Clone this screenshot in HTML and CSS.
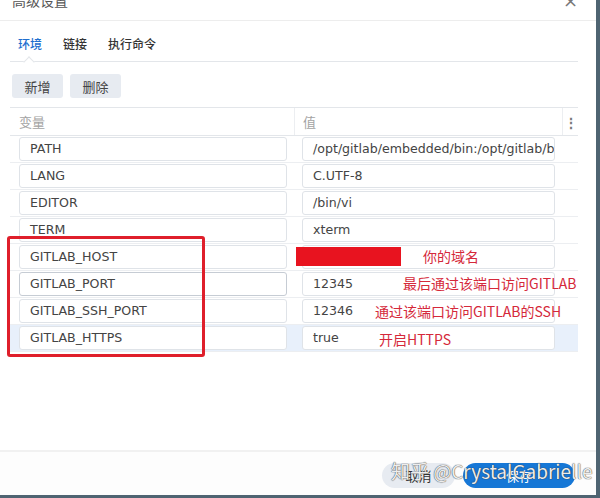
FILE: index.html
```html
<!DOCTYPE html>
<html lang="zh">
<head>
    <meta charset="UTF-8">
    <title>高级设置</title>
    <link rel="stylesheet" href="styles.css">
</head>
<body>
    <div class="dialog">
        <div class="dlg-header">
            <span class="dlg-title">高级设置</span>
            <span class="dlg-close">&times;</span>
        </div>

        <div class="tabs">
            <span class="tab active">环境</span>
            <span class="tab">链接</span>
            <span class="tab">执行命令</span>
        </div>

        <div class="toolbar">
            <button class="btn">新增</button>
            <button class="btn">删除</button>
        </div>

        <div class="grid">
            <div class="grid-head">
                <div class="col-var">变量</div>
                <div class="col-val">值</div>
                <div class="col-menu">&#8942;</div>
            </div>
            <div class="grid-row">
                <div class="col-var"><div class="field">PATH</div></div>
                <div class="col-val"><div class="field">/opt/gitlab/embedded/bin:/opt/gitlab/bin:/usr/local/sbin</div></div>
            </div>
            <div class="grid-row">
                <div class="col-var"><div class="field">LANG</div></div>
                <div class="col-val"><div class="field">C.UTF-8</div></div>
            </div>
            <div class="grid-row">
                <div class="col-var"><div class="field">EDITOR</div></div>
                <div class="col-val"><div class="field">/bin/vi</div></div>
            </div>
            <div class="grid-row">
                <div class="col-var"><div class="field">TERM</div></div>
                <div class="col-val"><div class="field">xterm</div></div>
            </div>
            <div class="grid-row">
                <div class="col-var"><div class="field">GITLAB_HOST</div></div>
                <div class="col-val"><div class="field"></div></div>
            </div>
            <div class="grid-row">
                <div class="col-var"><div class="field hover">GITLAB_PORT</div></div>
                <div class="col-val"><div class="field">12345</div></div>
            </div>
            <div class="grid-row">
                <div class="col-var"><div class="field">GITLAB_SSH_PORT</div></div>
                <div class="col-val"><div class="field">12346</div></div>
            </div>
            <div class="grid-row selected">
                <div class="col-var"><div class="field">GITLAB_HTTPS</div></div>
                <div class="col-val"><div class="field">true</div></div>
            </div>
        </div>

        <div class="spacer"></div>

        <div class="dlg-footer">
            <button class="pill">取消</button>
            <button class="pill primary">保存</button>
        </div>

        <!-- annotations drawn over the screenshot -->
        <div class="mark-box"></div>
        <div class="mark-fill"></div>
        <span class="note note-host">你的域名</span>
        <span class="note note-port">最后通过该端口访问GITLAB</span>
        <span class="note note-ssh">通过该端口访问GITLAB的SSH</span>
        <span class="note note-https">开启HTTPS</span>
        <span class="watermark">知乎 @CrystalGabrielle</span>
    </div>
</body>
</html>
```

FILE: styles.css
```css
body, html {
    margin: 0;
    padding: 0;
    height: 100%;
    overflow: hidden;
    background-color: #4f6472;
    font-family: "DejaVu Sans", "Noto Sans CJK SC", sans-serif;
    font-size: 12px;
    color: #444;
}

.dialog {
    position: relative;
    width: 596px;
    height: 495px;
    background-color: #fff;
    display: flex;
    flex-direction: column;
    overflow: hidden;
}

.dlg-header {
    height: 20px;
    flex-shrink: 0;
    display: flex;
    justify-content: space-between;
    align-items: flex-start;
    padding: 0 18px 0 12px;
    border-bottom: 1px solid #ededed;
    overflow: hidden;
}

.dlg-title {
    font-family: "Noto Sans CJK SC", sans-serif;
    font-size: 14px;
    line-height: 16px;
    margin-top: -8px;
    color: #555;
}

.dlg-close {
    font-size: 18px;
    line-height: 16px;
    margin-top: -7px;
    color: #777;
}

.tabs {
    height: 41px;
    flex-shrink: 0;
    display: flex;
    align-items: center;
    gap: 21px;
    margin: 0 18px 0 10px;
    padding: 4px 8px 0;
    box-sizing: border-box;
    border-bottom: 1px solid #e3e6ea;
}

.tab {
    position: relative;
    font-family: "Noto Sans CJK SC", sans-serif;
    font-size: 12px;
    font-weight: 500;
    color: #333;
}

.tab.active {
    color: #1f6fcf;
}

.tab.active::after {
    content: "";
    position: absolute;
    left: 7px;
    bottom: -14px;
    width: 7px;
    height: 7px;
    background: #fff;
    border-left: 1px solid #e3e6ea;
    border-top: 1px solid #e3e6ea;
    transform: rotate(45deg);
}

.toolbar {
    display: flex;
    gap: 7px;
    padding: 12px 0 9px 12px;
    flex-shrink: 0;
}

.btn {
    width: 51px;
    height: 24px;
    border: none;
    border-radius: 3px;
    background-color: #e7ebf1;
    font-family: "Noto Sans CJK SC", sans-serif;
    font-size: 13px;
    color: #444;
    padding: 0;
}

.grid {
    margin: 0 18px 0 10px;
    border-top: 1px solid #e3e6ea;
    flex-shrink: 0;
}

.grid-head,
.grid-row {
    display: flex;
    height: 27px;
    box-sizing: border-box;
    border-bottom: 1px solid #eceef1;
}

.grid-head {
    height: 28px;
    border-bottom-color: #e3e6ea;
    color: #a3a3a3;
    font-family: "Noto Sans CJK SC", sans-serif;
    font-size: 13px;
}

.grid-head > div {
    display: flex;
    align-items: center;
}

.col-var {
    width: 285px;
    padding: 0 8px 0 9px;
    box-sizing: border-box;
    border-right: 1px solid #eceef1;
}

.col-val {
    width: 268px;
    padding: 0 8px 0 7px;
    box-sizing: border-box;
}

.grid-head .col-val {
    border-right: 1px solid #eceef1;
    padding-left: 8px;
}

.grid-row .col-var {
    border-right: none;
}

.col-menu {
    flex: 1;
    justify-content: center;
    color: #777;
    font-size: 14px;
    font-weight: bold;
}

.grid-row > div {
    display: flex;
    align-items: center;
}

.grid-row.selected {
    background-color: #e8f0fb;
}

.field {
    width: 100%;
    height: 24px;
    box-sizing: border-box;
    border: 1px solid #dfe3e8;
    border-radius: 3px;
    background: #fff;
    padding: 0 8px 0 10px;
    font-size: 12.6px;
    line-height: 22px;
    white-space: nowrap;
    overflow: hidden;
    color: #444;
}

.field.hover {
    border-color: #c6ccd4;
}

.spacer {
    flex: 1;
}

.dlg-footer {
    height: 43px;
    flex-shrink: 0;
    border-top: 2px solid #f1f1f1;
    background-color: #fdfdfd;
    display: flex;
    justify-content: flex-end;
    align-items: center;
    gap: 8px;
    padding: 0 21px 0 0;
}

.pill {
    height: 25px;
    border: none;
    border-radius: 13px;
    font-family: "Noto Sans CJK SC", sans-serif;
    font-size: 13px;
    width: 73px;
    background-color: #e7ebf1;
    color: #333;
    padding: 0;
    margin-top: 3px;
}

.pill.primary {
    width: 112px;
    background-color: #1677d6;
    color: #fff;
}

.mark-box {
    position: absolute;
    left: 7px;
    top: 236px;
    width: 192px;
    height: 115px;
    border: 3px solid #df1f2b;
    border-radius: 3px;
}

.mark-fill {
    position: absolute;
    left: 296px;
    top: 247px;
    width: 105px;
    height: 19px;
    background-color: #e8131f;
}

.note {
    position: absolute;
    font-family: "Noto Sans CJK SC", sans-serif;
    font-size: 14px;
    line-height: 16px;
    color: #d5283a;
}

.note-host  { left: 423px; top: 248px; }
.note-port  { left: 403px; top: 275px; }
.note-ssh   { left: 375px; top: 303px; }
.note-https { left: 379px; top: 331px; }

.watermark {
    position: absolute;
    left: 391px;
    top: 460px;
    font-family: "Noto Sans CJK SC", sans-serif;
    font-size: 19px;
    line-height: 22px;
    color: rgba(255, 255, 255, 0.92);
    text-shadow: 0 0 1px rgba(60, 60, 60, 0.9), 0 0 1px rgba(60, 60, 60, 0.9);
    white-space: nowrap;
}
```
